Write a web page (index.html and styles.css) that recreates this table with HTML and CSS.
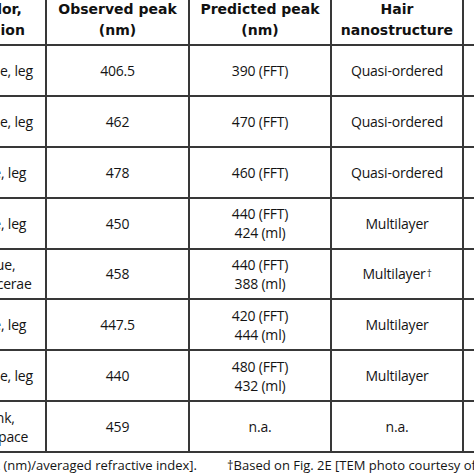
FILE: index.html
```html
<!DOCTYPE html>
<html lang="en">
<head>
<meta charset="utf-8">
<title>Table</title>
<link rel="stylesheet" href="styles.css">
</head>
<body>
<div class="table">
  <div class="cell head">Color,<br>region</div>
  <div class="cell head">Observed peak<br>(nm)</div>
  <div class="cell head">Predicted peak<br>(nm)</div>
  <div class="cell head">Hair<br>nanostructure</div>
  <div class="cell head"></div>

  <div class="cell">Purple, leg</div>
  <div class="cell">406.5</div>
  <div class="cell">390 (FFT)</div>
  <div class="cell">Quasi-ordered</div>
  <div class="cell"></div>

  <div class="cell">Purple, leg</div>
  <div class="cell">462</div>
  <div class="cell">470 (FFT)</div>
  <div class="cell">Quasi-ordered</div>
  <div class="cell"></div>

  <div class="cell">Blue, leg</div>
  <div class="cell">478</div>
  <div class="cell">460 (FFT)</div>
  <div class="cell">Quasi-ordered</div>
  <div class="cell"></div>

  <div class="cell">Blue, leg</div>
  <div class="cell">450</div>
  <div class="cell">440 (FFT)<br>424 (ml)</div>
  <div class="cell">Multilayer</div>
  <div class="cell"></div>

  <div class="cell">Blue,<br>chelicerae</div>
  <div class="cell">458</div>
  <div class="cell">440 (FFT)<br>388 (ml)</div>
  <div class="cell">Multilayer<sup class="dag">†</sup></div>
  <div class="cell"></div>

  <div class="cell">Blue, leg</div>
  <div class="cell">447.5</div>
  <div class="cell">420 (FFT)<br>444 (ml)</div>
  <div class="cell">Multilayer</div>
  <div class="cell"></div>

  <div class="cell">Purple, leg</div>
  <div class="cell">440</div>
  <div class="cell">480 (FFT)<br>432 (ml)</div>
  <div class="cell">Multilayer</div>
  <div class="cell"></div>

  <div class="cell">Pink,<br>carapace</div>
  <div class="cell">459</div>
  <div class="cell">n.a.</div>
  <div class="cell">n.a.</div>
  <div class="cell"></div>
</div>
<div class="notes">
  <span class="n1">ml, multilayer model [peak (nm)/averaged refractive index].</span>
  <span class="n2">†Based on Fig. 2E [TEM photo courtesy of</span>
</div>
</body>
</html>
```

FILE: styles.css
```css
html, body {
  margin: 0;
  padding: 0;
  background: #ffffff;
  overflow: hidden;
}

body {
  width: 474px;
  height: 474px;
  font-family: "Open Sans", "Noto Sans", sans-serif;
  color: #141414;
}

.table {
  display: grid;
  width: max-content;
  grid-template-columns: 91px 141px 140px 130px 60px;
  grid-template-rows: 54px repeat(8, 48.875px);
  gap: 2px;
  background: #383838;
  border: 2px solid #383838;
  margin: -12px 0 0 -48px;
}

.cell {
  background: #ffffff;
  display: flex;
  align-items: center;
  justify-content: center;
  text-align: center;
  font-size: 14px;
  letter-spacing: -0.2px;
  line-height: 19px;
  white-space: nowrap;
}

.head {
  font-family: "DejaVu Sans", "Open Sans", sans-serif;
  font-weight: bold;
  font-size: 14px;
  letter-spacing: 0;
  line-height: 21px;
  padding-top: 5px;
  color: #111111;
}

.dag {
  font-size: 10px;
  line-height: 0;
  position: relative;
  top: -1px;
  margin-left: 1px;
}

.notes {
  display: flex;
  margin-left: -300px;
  margin-top: 3px;
  font-size: 13px;
  line-height: 18px;
  white-space: nowrap;
  color: #141414;
}

.n1 {
  flex: 0 0 497px;
  text-align: right;
}

.n2 {
  margin-left: 30px;
}
```
